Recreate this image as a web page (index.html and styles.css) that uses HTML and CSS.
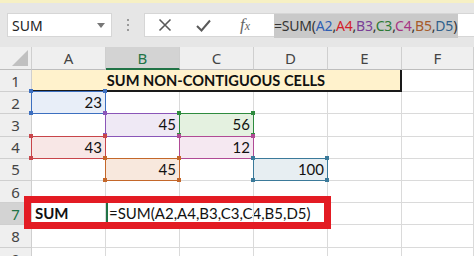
FILE: index.html
```html
<!DOCTYPE html>
<html lang="en">
<head>
    <meta charset="UTF-8">
    <title>Sum non-contiguous cells</title>
    <link rel="stylesheet" href="styles.css">
</head>
<body>
    <div class="top-strip"></div>

    <div class="toolbar">
        <div class="name-box">
            <span>SUM</span>
            <svg class="caret" width="8" height="5" viewBox="0 0 8 5"><path d="M0 0h8L4 5z" fill="#777"/></svg>
        </div>
        <div class="grip">
            <i></i><i></i><i></i>
        </div>
        <div class="formula-bar">
            <svg class="fb-icon" width="14" height="14" viewBox="0 0 14 14"><path d="M1.5 1.5l11 11M12.5 1.5l-11 11" stroke="#5a5a5a" stroke-width="1.6" fill="none"/></svg>
            <svg class="fb-icon check" width="15" height="13" viewBox="0 0 15 13"><path d="M1 7l4.5 4.5L14 1.5" stroke="#5a5a5a" stroke-width="2" fill="none"/></svg>
            <span class="fx">f<span>x</span></span>
            <div class="formula">
                <span class="formula-sel">=SUM(<span class="ref-blue">A2</span>,<span class="ref-red">A4</span>,<span class="ref-purple">B3</span>,<span class="ref-green">C3</span>,<span class="ref-pink">C4</span>,<span class="ref-brown">B5</span>,<span class="ref-teal">D5</span>)</span>
            </div>
        </div>
    </div>

    <div class="sheet">
        <!-- column headers -->
        <div class="corner"><span></span></div>
        <div class="col-head">A</div>
        <div class="col-head active">B</div>
        <div class="col-head">C</div>
        <div class="col-head">D</div>
        <div class="col-head">E</div>
        <div class="col-head">F</div>

        <!-- row 1 -->
        <div class="row-head">1</div>
        <div class="cell title">SUM NON-CONTIGUOUS CELLS</div>
        <div class="cell"></div>

        <!-- row 2 -->
        <div class="row-head">2</div>
        <div class="cell num hl blue">23</div>
        <div class="cell"></div>
        <div class="cell"></div>
        <div class="cell"></div>
        <div class="cell"></div>
        <div class="cell"></div>

        <!-- row 3 -->
        <div class="row-head">3</div>
        <div class="cell"></div>
        <div class="cell num hl purple">45</div>
        <div class="cell num hl green">56</div>
        <div class="cell"></div>
        <div class="cell"></div>
        <div class="cell"></div>

        <!-- row 4 -->
        <div class="row-head">4</div>
        <div class="cell num hl red">43</div>
        <div class="cell"></div>
        <div class="cell num hl pink">12</div>
        <div class="cell"></div>
        <div class="cell"></div>
        <div class="cell"></div>

        <!-- row 5 -->
        <div class="row-head">5</div>
        <div class="cell"></div>
        <div class="cell num hl brown">45</div>
        <div class="cell"></div>
        <div class="cell num hl teal">100</div>
        <div class="cell"></div>
        <div class="cell"></div>

        <!-- row 6 -->
        <div class="row-head">6</div>
        <div class="cell"></div>
        <div class="cell"></div>
        <div class="cell"></div>
        <div class="cell"></div>
        <div class="cell"></div>
        <div class="cell"></div>

        <!-- row 7 -->
        <div class="row-head active">7</div>
        <div class="cell bold">SUM</div>
        <div class="cell editing">=SUM(A2,A4,B3,C3,C4,B5,D5)</div>
        <div class="cell"></div>
        <div class="cell"></div>
        <div class="cell"></div>
        <div class="cell"></div>

        <!-- row 8 -->
        <div class="row-head">8</div>
        <div class="cell"></div>
        <div class="cell"></div>
        <div class="cell"></div>
        <div class="cell"></div>
        <div class="cell"></div>
        <div class="cell"></div>

        <!-- row 9, only its top shows -->
        <div class="row-head last">9</div>
        <div class="cell"></div>
        <div class="cell"></div>
        <div class="cell"></div>
        <div class="cell"></div>
        <div class="cell"></div>
        <div class="cell"></div>

        <!-- red callout round row 7 -->
        <div class="callout"></div>
    </div>
</body>
</html>
```

FILE: styles.css
```css
body {
    margin: 0;
    width: 474px;
    height: 256px;
    overflow: hidden;
    background-color: #fff;
    font-family: 'Lato', 'Noto Sans', sans-serif;
    color: #111;
}

.top-strip {
    height: 3px;
    background-color: #f6f0c4;
}

/* formula bar */
.toolbar {
    height: 44px;
    background-color: #e6e6e6;
    display: flex;
    align-items: flex-start;
    padding: 10px 0 0 7px;
    box-sizing: border-box;
}

.name-box {
    width: 105px;
    height: 24px;
    background-color: #fff;
    border: 1px solid #d6d6d6;
    box-sizing: border-box;
    display: flex;
    align-items: center;
    justify-content: space-between;
    padding: 0 6px 0 4px;
    font-family: 'Noto Sans', sans-serif;
    font-size: 14px;
    color: #222;
}

.grip {
    width: 32px;
    display: flex;
    flex-direction: column;
    align-items: center;
    gap: 3px;
    padding-top: 6px;
}

.grip i {
    width: 2px;
    height: 2px;
    background-color: #9a9a9a;
}

.formula-bar {
    flex: 1;
    height: 24px;
    background-color: #fff;
    border: 1px solid #d6d6d6;
    border-right: none;
    box-sizing: border-box;
    display: flex;
    align-items: center;
    padding-left: 13px;
}

.fb-icon.check {
    margin-left: 24px;
}

.fx {
    margin-left: 29px;
    font-family: 'Liberation Serif', serif;
    font-style: italic;
    font-size: 17px;
    color: #666;
    width: 34px;
}

.fx span {
    font-size: 12px;
}

.formula {
    font-family: 'Noto Sans', sans-serif;
    font-size: 14px;
    letter-spacing: -0.2px;
    color: #333;
}

.formula-sel {
    background-color: #c9c9c9;
    padding: 2px 1px 3px 0;
}

.ref-blue { color: #2f5fb3; }
.ref-red { color: #d3212b; }
.ref-purple { color: #7a3e97; }
.ref-green { color: #2d7a36; }
.ref-pink { color: #a63383; }
.ref-brown { color: #a65a2a; }
.ref-teal { color: #2f5f8c; }

/* sheet grid */
.sheet {
    position: relative;
    display: grid;
    grid-template-columns: 32px repeat(5, 74px) 1fr;
    grid-template-rows: 23px repeat(8, 22.2px) 9px;
}

.corner,
.col-head,
.row-head {
    background-color: #efefef;
    color: #444;
    font-family: 'Noto Sans', sans-serif;
    font-size: 15px;
    display: flex;
    align-items: center;
    justify-content: center;
    box-sizing: border-box;
    border-right: 1px solid #cfcfcf;
    border-bottom: 1px solid #cfcfcf;
}

.row-head.last {
    align-items: flex-start;
    overflow: hidden;
    line-height: 22px;
}

.corner {
    position: relative;
    border-bottom-color: #bdbdbd;
}

.corner span {
    position: absolute;
    right: 3px;
    bottom: 3px;
    border-left: 16px solid transparent;
    border-bottom: 16px solid #c0c0c0;
}

.col-head {
    border-bottom-color: #bdbdbd;
}

.col-head.active {
    background-color: #d3d3d3;
    color: #217346;
    border-bottom: 2px solid #217346;
}

.row-head.active {
    background-color: #d3d3d3;
    color: #217346;
}

.cell {
    box-sizing: border-box;
    border-right: 1px solid #dadada;
    border-bottom: 1px solid #dadada;
    font-size: 15px;
    line-height: 21px;
    padding: 0 3px;
    white-space: nowrap;
}

.cell.num {
    text-align: right;
}

.cell.bold {
    font-weight: bold;
}

.cell.title {
    grid-column: span 5;
    background-color: #fff2cc;
    font-weight: bold;
    font-size: 14.6px;
    text-align: center;
    border-right: 2px solid #1a1a1a;
    border-bottom: 2px solid #1a1a1a;
}

.cell.editing {
    border-left: 2px solid #217346;
    border-right: none;
    padding-left: 1px;
    overflow: visible;
}

/* coloured range highlights */
.hl {
    position: relative;
    background-color: var(--bg);
}

.hl::before {
    content: '';
    position: absolute;
    top: -1px;
    left: -1px;
    right: -1px;
    bottom: -1px;
    border: 1px solid var(--c);
}

.hl::after {
    content: '';
    position: absolute;
    top: -3px;
    left: -3px;
    width: 4px;
    height: 4px;
    background-color: var(--c);
    box-shadow: 74px 0 var(--c), 0 22px var(--c), 74px 22px var(--c);
}

.hl.blue { --c: #3c6fc0; --bg: #e8eef8; }
.hl.purple { --c: #8a55b8; --bg: #efe9f5; }
.hl.green { --c: #2e8b3e; --bg: #e4f1e0; }
.hl.red { --c: #c8454a; --bg: #f8e7e6; }
.hl.pink { --c: #b04a95; --bg: #f5e8f1; }
.hl.brown { --c: #c4672a; --bg: #f8e8dd; }
.hl.teal { --c: #3b7a9a; --bg: #e7eef2; }

.callout {
    position: absolute;
    left: 24px;
    top: 149px;
    width: 307px;
    height: 33px;
    border: 7px solid #e31b23;
    box-sizing: border-box;
}
```
